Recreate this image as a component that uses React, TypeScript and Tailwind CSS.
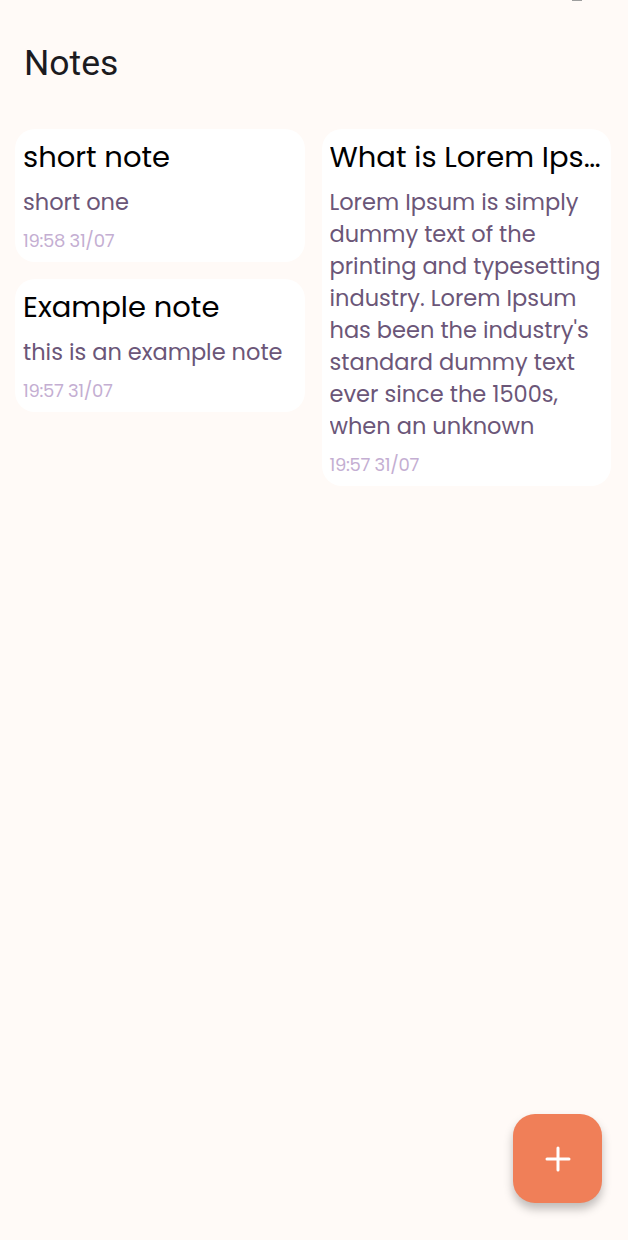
const notes = [
  {
    title: "short note",
    body: "short one",
    time: "19:58 31/07",
  },
  {
    title: "Example note",
    body: "this is an example note",
    time: "19:57 31/07",
  },
];

const lorem = {
  title: "What is Lorem Ipsum?",
  body: "Lorem Ipsum is simply dummy text of the printing and typesetting industry. Lorem Ipsum has been the industry's standard dummy text ever since the 1500s, when an unknown printer took a galley of type and scrambled it to make a type specimen book.",
  time: "19:57 31/07",
};

function NoteCard({ title, body, time }: { title: string; body: string; time: string }) {
  return (
    <div className="bg-white rounded-[20px] px-2 pt-2 pb-[9px]">
      <div className="text-[29px] leading-[40px] text-black truncate">{title}</div>
      <div className="mt-[9px] text-[22.5px] leading-[32px] text-[#6b5678] max-h-[256px] overflow-hidden">{body}</div>
      <div className="mt-[11px] text-[18px] leading-[24px] text-[#c4aed2] tracking-[-0.3px]">{time}</div>
    </div>
  );
}

export default function App() {
  return (
    <div className="relative w-[628px] h-[1240px] bg-[#fffaf7] overflow-hidden font-['Poppins','DejaVu_Sans',sans-serif]">
      <div className="flex justify-end pr-[46px]">
        <div className="w-[10px] h-[1px] bg-[#9e9e9e]" />
      </div>
      <div className="px-6 pt-[40px] pb-[44px] font-['Roboto',sans-serif] text-[35.5px] leading-[44px] text-[#1c1b1f]">
        Notes
      </div>
      <div className="grid grid-cols-2 gap-[17px] pl-[15px] pr-[17px] items-start">
        <div className="flex flex-col gap-[17px]">
          {notes.map((n) => (
            <NoteCard key={n.title} {...n} />
          ))}
        </div>
        <NoteCard {...lorem} />
      </div>
      <button className="absolute left-[513px] top-[1114px] w-[89px] h-[89px] rounded-[22px] bg-[#f07f58] shadow-[0_6px_10px_rgba(0,0,0,0.25)] flex items-center justify-center">
        <svg width="26" height="26" viewBox="0 0 26 26" fill="none" stroke="white" strokeWidth="3" strokeLinecap="round">
          <path d="M13 2v22M2 13h22" />
        </svg>
      </button>
    </div>
  );
}
